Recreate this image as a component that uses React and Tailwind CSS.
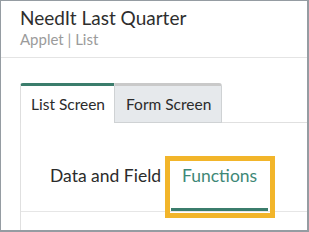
import React from 'react';

const font = { fontFamily: 'Lato, "Open Sans", sans-serif' };

export default function App() {
  return (
    <div
      className="w-[309px] h-[232px] bg-white border-l border-t border-r-2 border-b-2 border-[#959ca2] overflow-hidden flex flex-col box-border"
      style={font}
    >
      {/* Header */}
      <div className="pl-[19px] pt-[6px] pb-[9px] border-b border-[#e4e4e4]">
        <div className="text-[19px] leading-[22px] text-[#2e2e2e]">NeedIt Last Quarter</div>
        <div className="mt-[1px] text-[15px] leading-[18px] text-[#9b9b9b]">Applet | List</div>
      </div>

      {/* Tabs */}
      <div className="mt-[25px] pl-[19px] flex">
        <div className="w-[94px] pl-[10px] pt-[8px] pb-[9px] border-l border-t-[3px] border-l-[#dedede] border-t-[#3b7d6c] rounded-tl-[3px] text-[15.5px] leading-[20px] text-[#2b2b2b] whitespace-nowrap">
          List Screen
        </div>
        <div className="w-[108px] pl-[11px] pt-[8px] pb-[8px] bg-[#e6e9ec] border-t-[3px] border-x border-b border-t-[#c9c9c9] border-x-[#cfd2d4] border-b-[#cfd2d4] rounded-tr-[3px] text-[15.5px] leading-[20px] text-[#2b2b2b] whitespace-nowrap">
          Form Screen
        </div>
        <div className="flex-1 border-b border-[#e0e0e0]" />
      </div>

      {/* Panel */}
      <div className="flex-1 ml-[19px] border-l border-[#e0e0e0]">
        <div className="flex pl-[18px] pt-[41px] border-b border-[#e6e6e6]">
          <div className="w-[132px] pl-[11px] pb-[23px] text-[17.5px] leading-[24px] text-[#2b2b2b] whitespace-nowrap">
            Data and Field
          </div>
          <div className="relative w-[97px] pl-[11px] pb-[20px] border-b-[3px] border-[#3b7d6c] text-[17.5px] leading-[24px] text-[#3e8877] whitespace-nowrap">
            Functions
            <div className="absolute left-[-6px] right-[-7px] top-[-8px] bottom-[-10px] border-[5px] border-[#f2b52a]" />
          </div>
        </div>
      </div>
    </div>
  );
}
